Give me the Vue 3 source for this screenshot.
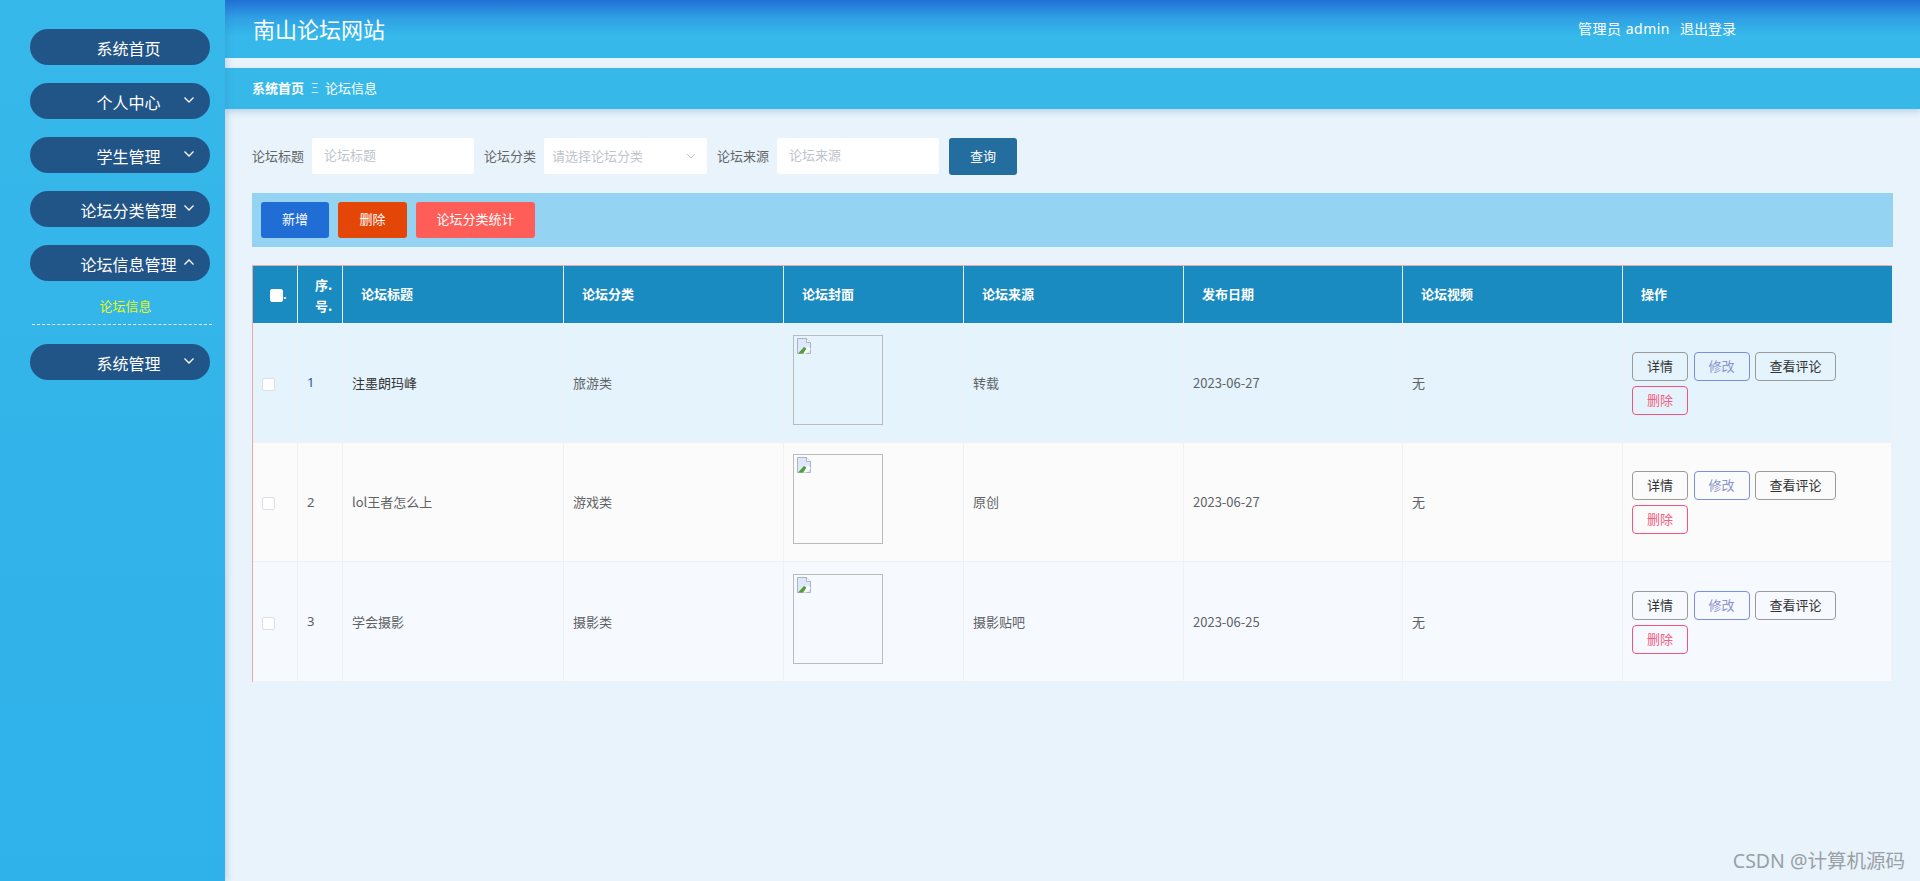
<script setup>
import { ref } from 'vue';

const menus = ref([
    { name: '系统首页', arrow: '' },
    { name: '个人中心', arrow: 'down' },
    { name: '学生管理', arrow: 'down' },
    { name: '论坛分类管理', arrow: 'down' },
    { name: '论坛信息管理', arrow: 'up', children: ['论坛信息'] },
    { name: '系统管理', arrow: 'down' },
]);

const rows = ref([
    { id: 1, title: '注墨朗玛峰', type: '旅游类', source: '转载', date: '2023-06-27', video: '无' },
    { id: 2, title: 'lol王者怎么上', type: '游戏类', source: '原创', date: '2023-06-27', video: '无' },
    { id: 3, title: '学会摄影', type: '摄影类', source: '摄影贴吧', date: '2023-06-25', video: '无' },
]);
</script>

<template>
    <div class="page">
        <aside class="sidebar">
            <template v-for="menu in menus" :key="menu.name">
                <div class="menu-item">
                    <span class="menu-name">{{ menu.name }}</span>
                    <svg v-if="menu.arrow" class="menu-arrow" viewBox="0 0 12 8" width="12" height="8">
                        <path v-if="menu.arrow === 'down'" d="M1.5 1.5 6 6l4.500-4.500" />
                        <path v-else d="M1.500 6.500 6 2l4.500 4.500" />
                    </svg>
                </div>
                <div v-if="menu.children" class="submenu">
                    <div v-for="child in menu.children" :key="child" class="submenu-item">{{ child }}</div>
                </div>
            </template>
        </aside>

        <main class="main">
            <header class="topbar">
                <div class="site-title">南山论坛网站</div>
                <div class="user-info">
                    <span class="user-name">管理员 admin</span>
                    <span>退出登录</span>
                </div>
            </header>

            <div class="breadcrumb">
                <b>系统首页</b>
                <span class="crumb-sep">Ξ</span>
                <span>论坛信息</span>
            </div>

            <section class="content">
                <div class="search-row">
                    <label>论坛标题</label>
                    <div class="field field-text placeholder">论坛标题</div>
                    <label>论坛分类</label>
                    <div class="field field-select placeholder">
                        <span>请选择论坛分类</span>
                        <svg viewBox="0 0 10 6" width="10" height="6">
                            <path d="M1 1l4 4 4-4" />
                        </svg>
                    </div>
                    <label>论坛来源</label>
                    <div class="field field-text placeholder">论坛来源</div>
                    <button class="btn-query">查询</button>
                </div>

                <div class="toolbar">
                    <button class="btn-add">新增</button>
                    <button class="btn-del">删除</button>
                    <button class="btn-stat">论坛分类统计</button>
                </div>

                <table class="table">
                    <colgroup>
                        <col style="width: 45px" />
                        <col style="width: 45px" />
                        <col style="width: 221px" />
                        <col style="width: 220px" />
                        <col style="width: 180px" />
                        <col style="width: 220px" />
                        <col style="width: 219px" />
                        <col style="width: 220px" />
                        <col />
                    </colgroup>
                    <thead>
                        <tr>
                            <th class="cell-check"><span class="check check-head"></span><span class="dot">.</span></th>
                            <th class="cell-index">序.<br />号.</th>
                            <th>论坛标题</th>
                            <th>论坛分类</th>
                            <th>论坛封面</th>
                            <th>论坛来源</th>
                            <th>发布日期</th>
                            <th>论坛视频</th>
                            <th>操作</th>
                        </tr>
                    </thead>
                    <tbody>
                        <tr v-for="row in rows" :key="row.id">
                            <td><span class="check"></span></td>
                            <td class="index">{{ row.id }}</td>
                            <td class="title">{{ row.title }}</td>
                            <td>{{ row.type }}</td>
                            <td>
                                <div class="cover">
                                    <svg viewBox="0 0 16 16" width="16" height="16">
                                        <path d="M1.500.500h9l4 4v11h-13z" fill="#dfe8fb" stroke="#a9b4c6" />
                                        <path d="M10.500.500v4h4" fill="#fff" stroke="#a9b4c6" />
                                        <path d="M2 15.500 8 9l3 2-4 4.500z" fill="#4f9f32" />
                                        <path d="M11.500 8.500 15 11l-5 4.500H7.500z" fill="#fff" />
                                    </svg>
                                </div>
                            </td>
                            <td>{{ row.source }}</td>
                            <td>{{ row.date }}</td>
                            <td>{{ row.video }}</td>
                            <td>
                                <div class="actions">
                                    <button class="act">详情</button>
                                    <button class="act act-edit">修改</button>
                                    <button class="act">查看评论</button>
                                    <button class="act act-del">删除</button>
                                </div>
                            </td>
                        </tr>
                    </tbody>
                </table>
            </section>
        </main>

        <div class="watermark">CSDN @计算机源码</div>
    </div>
</template>

<style>
html,
body {
    margin: 0;
    background: #e8f3fb;
}
</style>

<style scoped>
.page {
    display: flex;
    min-height: 881px;
    height: 881px;
    overflow: hidden;
    position: relative;
    background: #e8f3fb;
    font-family: "Noto Sans CJK SC", "Noto Sans", sans-serif;
    font-size: 13px;
}

.sidebar {
    width: 225px;
    flex-shrink: 0;
    box-sizing: border-box;
    padding: 29px 15px 0 30px;
    background: linear-gradient(180deg, #36b8ea 0%, #2fb1ea 100%);
    box-shadow: 2px 0 6px rgba(60, 120, 170, 0.25);
    z-index: 2;
}

.menu-item {
    position: relative;
    height: 36px;
    margin-bottom: 18px;
    border-radius: 18px;
    background: #225587;
    color: #fff;
    font-size: 16px;
    line-height: 39px;
    text-align: center;
}

.menu-name {
    display: inline-block;
    padding-left: 17px;
}

.menu-arrow {
    position: absolute;
    right: 15px;
    top: 13px;
    fill: none;
    stroke: #fff;
    stroke-width: 1.300;
}

.submenu {
    margin: -8px 0 19px 2px;
    width: 180px;
    border-bottom: 1px dashed #e6f4fb;
    height: 33px;
    text-align: center;
}

.submenu-item {
    padding-left: 7px;
    padding-top: 5px;
    color: #e6f711;
    font-size: 13px;
    line-height: 20px;
}

.main {
    flex: 1;
    min-width: 0;
}

.topbar {
    display: flex;
    justify-content: space-between;
    height: 58px;
    padding: 0 184px 0 28px;
    background: linear-gradient(180deg, #2170d5 0%, #2f9fe4 30%, #36b9ea 62%);
    color: #fff;
}

.site-title {
    font-size: 22px;
    line-height: 56px;
}

.user-info {
    display: flex;
    gap: 10px;
    font-family: "Noto Sans", "Noto Sans CJK SC", sans-serif;
    font-size: 14px;
    line-height: 58px;
}

.user-name {
    letter-spacing: 0.500px;
}

.breadcrumb {
    display: flex;
    gap: 7px;
    align-items: center;
    box-sizing: border-box;
    height: 41px;
    margin-top: 10px;
    padding: 0 0 2px 27px;
    background: #36b9e9;
    color: #fff;
    font-size: 13px;
    box-shadow: 0 3px 6px rgba(90, 140, 190, 0.3);
}

.crumb-sep {
    width: 7px;
    font-size: 13px;
    font-weight: 300;
}

.content {
    padding: 28px 27px 0;
}

.search-row {
    display: flex;
    align-items: center;
    height: 38px;
    color: #666;
    font-size: 13px;
}

.search-row label {
    margin-right: 8px;
    padding-bottom: 2px;
}

.field {
    box-sizing: border-box;
    height: 36px;
    margin-right: 10px;
    background: #fff;
    border-radius: 2px;
    line-height: 34px;
}

.placeholder {
    color: #c0c4cc;
}

.field-text {
    width: 162px;
    padding-left: 12px;
}

.field-select {
    display: flex;
    justify-content: space-between;
    align-items: center;
    width: 163px;
    padding: 0 11px 0 8px;
}

.field-select svg {
    fill: none;
    stroke: #c0c4cc;
}

.search-row .btn-query {
    width: 68px;
    height: 37px;
    background: #236d9f;
}

button {
    padding: 0 0 2px;
    border: 0;
    border-radius: 3px;
    color: #fff;
    font-family: inherit;
    font-size: 13px;
}

.toolbar {
    display: flex;
    align-items: center;
    gap: 9px;
    height: 54px;
    margin-top: 18px;
    padding-left: 9px;
    background: #94d4f2;
}

.toolbar button {
    height: 36px;
    padding-bottom: 3px;
}

.btn-add {
    width: 68px;
    background: #206dd6;
}

.btn-del {
    width: 69px;
    background: #e44607;
}

.btn-stat {
    width: 119px;
    background: #fe5d58;
}

.table {
    width: 1640px;
    margin-top: 18px;
    border-collapse: separate;
    border-spacing: 0;
    table-layout: fixed;
    border-top: 1px solid #f0a8a2;
    border-left: 1px solid #f0a8a2;
}

.table th {
    box-sizing: border-box;
    height: 57px;
    padding: 0 0 2px 18px;
    background: #1a8bc1;
    border-right: 1px solid #e6f1f6;
    color: #fff;
    font-size: 13px;
    text-align: left;
}

.table th:last-child {
    border-right: 0;
}

.table th.cell-check {
    padding-left: 17px;
    white-space: nowrap;
}

.table th.cell-index {
    padding: 0 0 0 7px;
    line-height: 21px;
    text-align: center;
}

.dot {
    font-size: 11px;
}

.table td {
    box-sizing: border-box;
    height: 119.500px;
    padding: 0 9px;
    border-right: 1px solid #eef2f5;
    border-bottom: 1px solid #eef2f5;
    color: #606266;
    font-size: 13px;
}

.table tbody tr:nth-child(1) td {
    background: #e4f3fc;
}

.table tbody tr:nth-child(2) td {
    background: #fbfbfb;
}

.table tbody tr:nth-child(3) td {
    background: #f6f9fe;
}

.table tbody tr:first-child .title {
    color: #333;
}

.table tbody tr:first-child .index {
    color: #1d5fb0;
}

.index {
    text-align: left;
    font-family: "Noto Sans", sans-serif;
}

.check {
    display: inline-block;
    box-sizing: border-box;
    width: 13px;
    height: 13px;
    vertical-align: middle;
    background: #fff;
    border: 1px solid #dcdfe6;
    border-radius: 2px;
}

.check-head {
    border-color: #fff;
}

.cover {
    box-sizing: border-box;
    width: 90px;
    height: 90px;
    margin-bottom: 5px;
    padding: 2px;
    border: 1px solid #bbb;
}

.cover svg {
    display: block;
}

.actions {
    display: flex;
    flex-wrap: wrap;
    gap: 5px 5.500px;
    padding-top: 2px;
}

.act {
    box-sizing: border-box;
    width: 56px;
    height: 29px;
    background: transparent;
    border: 1px solid #9a9a9a;
    border-radius: 4px;
    color: #333;
}

.act:nth-child(3) {
    width: 81px;
}

.act-edit {
    border-color: #7b8ee0;
    color: #8a93cf;
}

.act-del {
    border-color: #f3537c;
    color: #f3607f;
}

.watermark {
    position: absolute;
    right: 15px;
    bottom: 7px;
    color: #9a9fa6;
    font-size: 19.500px;
    font-family: "Noto Sans", "Noto Sans CJK SC", sans-serif;
}
</style>
